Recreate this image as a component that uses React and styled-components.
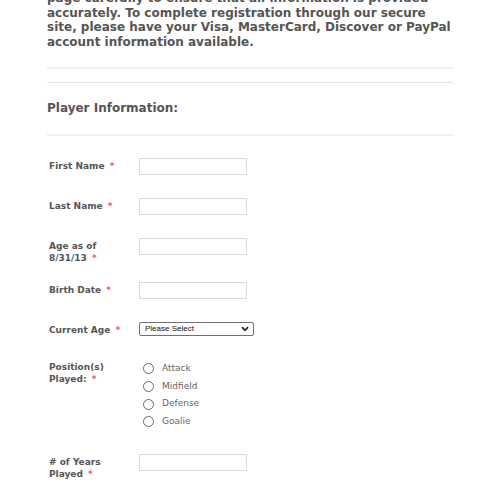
import React from "react";
import styled, { createGlobalStyle } from "styled-components";

const GlobalStyle = createGlobalStyle`
  html, body {
    margin: 0;
    padding: 0;
    background: #fff;
  }
  body {
    font-family: "DejaVu Sans", Verdana, sans-serif;
    color: #555;
  }
`;

const Page = styled.div`
  width: 406px;
  margin: -9px 0 0 47px;
`;

const Intro = styled.p`
  margin: 0;
  padding-bottom: 18px;
  font-size: 12px;
  font-weight: bold;
  line-height: 14.5px;
  border-bottom: 2px solid #efefef;
`;

const Header = styled.div`
  margin-top: 13px;
  padding: 17px 0 18px;
  border-top: 1px solid #e4e4e4;
  border-bottom: 2px solid #efefef;
`;

const Heading = styled.h2`
  margin: 0;
  font-size: 12px;
  line-height: 16px;
  font-weight: bold;
  color: #555;
`;

const FormList = styled.ul`
  list-style: none;
  margin: 0;
  padding: 22px 0 0;
`;

const Row = styled.li`
  display: flex;
  align-items: flex-start;
  padding: 0 0 12px 2px;
  margin-top: ${(p) => p.$shift || 0}px;
`;

const Label = styled.label`
  box-sizing: border-box;
  width: 90px;
  min-height: 28px;
  padding: 2px 8px 6px 0;
  font-size: 9px;
  font-weight: bold;
  line-height: 12px;
  color: #555;
`;

const Req = styled.span`
  color: #f55;
  margin-left: 2px;
`;

const TextInput = styled.input`
  display: block;
  box-sizing: border-box;
  width: 108px;
  height: 17px;
  margin: 0;
  border: 1px solid #dadada;
  box-shadow: inset 0 0 1px #e8e8e8;
  background: #fff;
  outline: none;
`;

const SelectWrap = styled.div`
  position: relative;
  display: flex;
  width: 115px;
  height: 14px;
`;

const Select = styled.select`
  display: block;
  box-sizing: border-box;
  width: 115px;
  height: 14px;
  margin: 0;
  padding: 0 0 0 5px;
  appearance: none;
  border: 1px solid #707070;
  border-radius: 2px;
  background: #fff;
  font-family: "Liberation Sans", Arial, sans-serif;
  font-size: 8px;
  line-height: 12px;
  color: #111;
`;

const Caret = styled.svg`
  position: absolute;
  right: 5px;
  top: 4px;
  pointer-events: none;
`;

const RadioGroup = styled.div`
  display: flex;
  flex-direction: column;
  margin-bottom: 12px;
`;

const RadioItem = styled.label`
  display: flex;
  align-items: center;
  height: 17.7px;
  font-size: 9px;
  color: #666;
`;

const Radio = styled.input`
  appearance: none;
  box-sizing: border-box;
  width: 11px;
  height: 11px;
  margin: 2px 8px 0 4px;
  border: 1px solid #6b6b6b;
  border-radius: 50%;
  background: #fff;
`;

const positions = ["Attack", "Midfield", "Defense", "Goalie"];

export default function App() {
  return (
    <>
      <GlobalStyle />
      <Page>
        <Intro>
          page carefully to ensure that all information is provided
          <br />
          accurately. To complete registration through our secure
          <br />
          site, please have your Visa, MasterCard, Discover or PayPal
          <br />
          account information available.
        </Intro>
        <Header>
          <Heading>Player Information:</Heading>
        </Header>
        <FormList>
          <Row>
            <Label>
              First Name<Req> *</Req>
            </Label>
            <TextInput type="text" />
          </Row>
          <Row>
            <Label>
              Last Name<Req> *</Req>
            </Label>
            <TextInput type="text" />
          </Row>
          <Row>
            <Label>
              Age as of 8/31/13<Req> *</Req>
            </Label>
            <TextInput type="text" />
          </Row>
          <Row>
            <Label>
              Birth Date<Req> *</Req>
            </Label>
            <TextInput type="text" />
          </Row>
          <Row>
            <Label>
              Current Age<Req> *</Req>
            </Label>
            <SelectWrap>
              <Select defaultValue="">
                <option value="">Please Select</option>
              </Select>
              <Caret width="8" height="6" viewBox="0 0 8 6">
                <path d="M1 1.2 L4 4.3 L7 1.2" fill="none" stroke="#222" strokeWidth="1.7" />
              </Caret>
            </SelectWrap>
          </Row>
          <Row $shift={-3}>
            <Label>
              Position(s) Played:<Req> *</Req>
            </Label>
            <RadioGroup>
              {positions.map((p) => (
                <RadioItem key={p}>
                  <Radio type="radio" name="position" />
                  {p}
                </RadioItem>
              ))}
            </RadioGroup>
          </Row>
          <Row>
            <Label>
              # of Years Played<Req> *</Req>
            </Label>
            <TextInput type="text" />
          </Row>
        </FormList>
      </Page>
    </>
  );
}
